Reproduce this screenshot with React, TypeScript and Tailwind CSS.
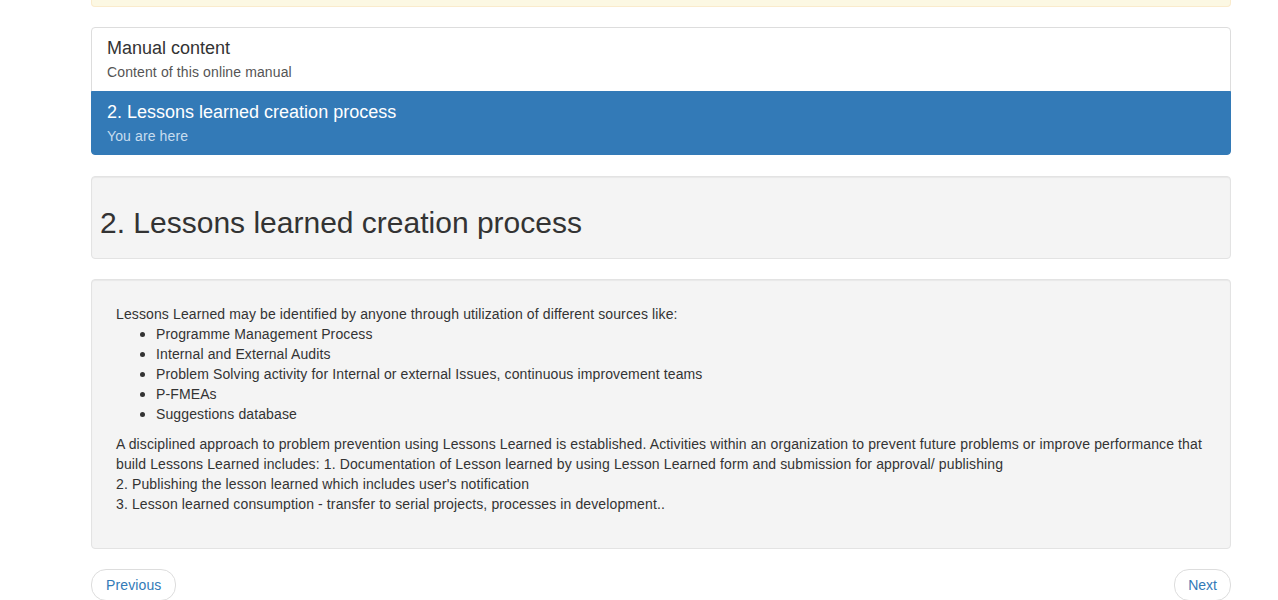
import React from "react";

export default function App() {
  return (
    <div className="min-h-[600px] bg-white text-[14px] leading-[20px] text-[#333]" style={{ fontFamily: '"Liberation Sans", Arial, sans-serif' }}>
      <div className="ml-[91px] w-[1140px]">
        <div className="h-[7px] rounded-b-[4px] border border-t-0 border-[#faebcc] bg-[#fcf8e3]" />

        <div className="mt-[20px] mb-[21px]">
          <div className="rounded-t-[4px] border border-[#ddd] bg-white px-[15px] pt-[10px] pb-[9px]">
            <h4 className="mb-[4px] text-[18px] leading-[20px] text-[#333]">Manual content</h4>
            <p className="leading-[20px] tracking-[0.12px] text-[#555]">Content of this online manual</p>
          </div>
          <div className="-mt-px rounded-b-[4px] border border-[#337ab7] bg-[#337ab7] px-[15px] pt-[10px] pb-[8px]">
            <h4 className="mb-[4px] text-[18px] leading-[20px] text-white">2. Lessons learned creation process</h4>
            <p className="leading-[20px] tracking-[0.12px] text-[#c7ddef]">You are here</p>
          </div>
        </div>

        <div className="mb-[20px] rounded-[4px] border border-[#e3e3e3] bg-[#f4f4f4] py-[9px] pr-[9px] pl-[8px] shadow-[inset_0_1px_1px_rgba(0,0,0,0.05)]">
          <h2 className="mt-[20px] mb-[10px] text-[30px] leading-[33px] font-normal text-[#333]">2. Lessons learned creation process</h2>
        </div>

        <div className="rounded-[4px] border border-[#e3e3e3] bg-[#f4f4f4] p-[19px] shadow-[inset_0_1px_1px_rgba(0,0,0,0.05)]">
          <div className="p-[5px] tracking-[0.12px]">
            <div>Lessons Learned may be identified by anyone through utilization of different sources like:</div>
            <ul className="mb-[10px] list-disc pl-[40px] marker:text-[16px]">
              <li>Programme Management Process</li>
              <li>Internal and External Audits</li>
              <li>Problem Solving activity for Internal or external Issues, continuous improvement teams</li>
              <li>P-FMEAs</li>
              <li>Suggestions database</li>
            </ul>
            <p className="mb-[10px]">
              A disciplined approach to problem prevention using Lessons Learned is established. Activities within an organization to prevent future problems or improve performance that build Lessons Learned includes: 1. Documentation of Lesson learned by using Lesson Learned form and submission for approval/ publishing
              <br />
              2. Publishing the lesson learned which includes user's notification
              <br />
              3. Lesson learned consumption - transfer to serial projects, processes in development..
            </p>
          </div>
        </div>

        <div className="mt-[20px] flex justify-between pb-[20px]">
          <a className="rounded-[15px] border border-[#ddd] bg-white px-[14px] py-[5px] tracking-[0.12px] text-[#337ab7]">Previous</a>
          <a className="rounded-[15px] border border-[#ddd] bg-white px-[13px] py-[5px] text-[#337ab7]">Next</a>
        </div>
      </div>
    </div>
  );
}
